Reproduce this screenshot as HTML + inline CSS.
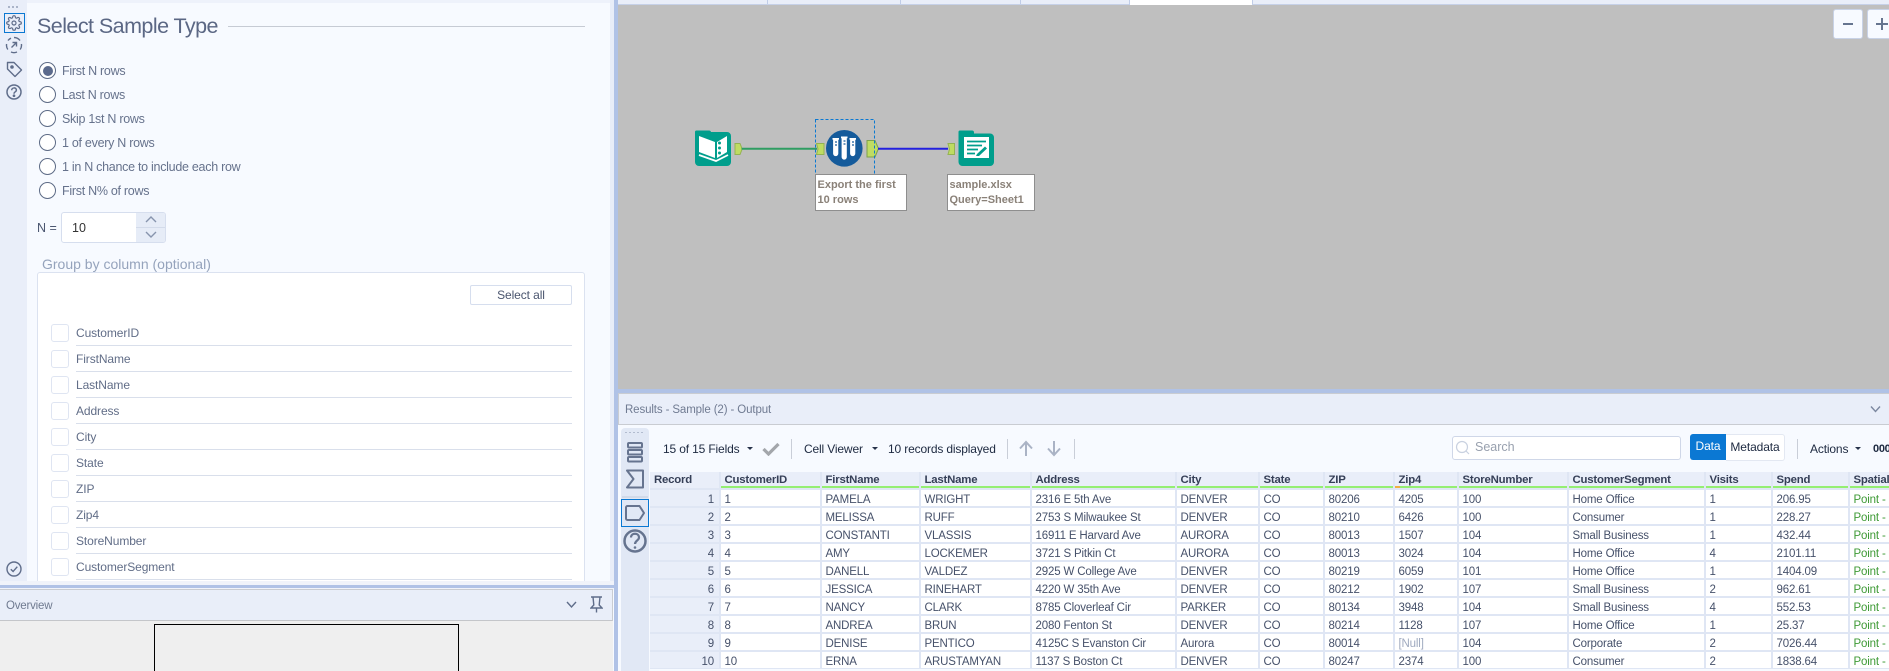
<!DOCTYPE html>
<html><head><meta charset="utf-8"><title>Sample</title>
<style>
html,body{margin:0;padding:0;width:1889px;height:671px;overflow:hidden;background:#f7faff;font-family:"Liberation Sans",sans-serif}
#root{position:relative;width:1889px;height:671px;overflow:hidden}
.a{position:absolute}
.t{position:absolute;white-space:nowrap}
.radio{position:absolute;left:39px;width:15px;height:15px;border:1.3px solid #5d6b86;border-radius:50%;background:#fff}
.rl{position:absolute;left:62px;font-size:12.5px;letter-spacing:-.28px;color:#66728c;line-height:16px;white-space:nowrap}
.cb{position:absolute;left:50.5px;width:16px;height:16px;border:1px solid #dfe5f2;border-radius:3px;background:#fff}
.cl{position:absolute;left:76px;font-size:12px;letter-spacing:-.1px;color:#616d87;line-height:16px;white-space:nowrap}
.dv{position:absolute;left:76px;width:496px;height:1px;background:#d9dfeb}
.sep{position:absolute;top:439px;width:1px;height:20px;background:#c9ced8}
.tb{position:absolute;font-size:12px;letter-spacing:-.15px;color:#1d2940;line-height:16px;white-space:nowrap;top:441px}
.car{position:absolute;top:447px;width:0;height:0;border-left:3px solid transparent;border-right:3px solid transparent;border-top:3px solid #27324a}
#g{position:absolute;left:650px;top:472px;width:1260px;height:199px;background:#dfe6f4;overflow:hidden}
.r{display:flex;height:16px;margin-bottom:2px}
.r>div{flex:none;margin-right:2px;background:#fff;white-space:nowrap;overflow:hidden;padding-left:3.5px;box-sizing:border-box;font-size:11.5px;letter-spacing:-.16px;line-height:20px;color:#46516a}
.r>div:nth-child(1){width:69px;background:#e9eef9;text-align:right;padding:0 5px 0 0;}
.r>div:nth-child(2){width:99px}.r>div:nth-child(3){width:97px}.r>div:nth-child(4){width:109px}.r>div:nth-child(5){width:143px}
.r>div:nth-child(6){width:81px}.r>div:nth-child(7){width:63px}.r>div:nth-child(8){width:68px}.r>div:nth-child(9){width:62px}
.r>div:nth-child(10){width:108px}.r>div:nth-child(11){width:135px}.r>div:nth-child(12){width:65px}.r>div:nth-child(13){width:75px}
.r>div:nth-child(14){width:60px;color:#3e9a35;margin:0}
.h{height:14px;margin-bottom:4px;position:relative;overflow:visible}
.h>div{background:#e9eef9;height:14px;font-size:11.4px;font-weight:bold;letter-spacing:-.2px;line-height:17px;color:#353f57;box-shadow:0 2px 0 #94ee72;overflow:visible}
.h>div:nth-child(1){text-align:left;padding-left:4px;box-shadow:none;height:16px}
.n{color:#a0aabf!important}
</style></head><body><div id="root">

<!-- left panel -->
<div class="a" style="left:0;top:0;width:610px;height:3px;background:#eef2fb"></div>
<div class="a" style="left:0;top:0;width:27px;height:581px;background:#e9eef9"></div>
<div class="a" style="left:610px;top:0;width:4px;height:590px;background:#e8edf8"></div>
<div class="a" style="left:614px;top:0;width:4px;height:671px;background:#b0c2e6"></div>
<div class="a" style="left:8px;top:6px;width:2px;height:2px;background:#aab4c8;box-shadow:4px 0 #aab4c8,8px 0 #aab4c8"></div>
<div class="a" style="left:4px;top:13px;width:19px;height:18px;border:1px solid #0a78d2"></div>
<svg class="a" style="left:6px;top:15px" width="16" height="16" viewBox="0 0 24 24" fill="none" stroke="#5f6d8a" stroke-width="1.8"><circle cx="12" cy="12" r="3"/><path d="M19.4 15a1.65 1.65 0 0 0 .33 1.82l.06.06a2 2 0 0 1 0 2.83 2 2 0 0 1-2.83 0l-.06-.06a1.65 1.65 0 0 0-1.82-.33 1.65 1.65 0 0 0-1 1.51V21a2 2 0 0 1-2 2 2 2 0 0 1-2-2v-.09A1.65 1.65 0 0 0 9 19.4a1.65 1.65 0 0 0-1.82.33l-.06.06a2 2 0 0 1-2.83 0 2 2 0 0 1 0-2.83l.06-.06a1.65 1.65 0 0 0 .33-1.82 1.65 1.65 0 0 0-1.51-1H3a2 2 0 0 1-2-2 2 2 0 0 1 2-2h.09A1.65 1.65 0 0 0 4.6 9a1.65 1.65 0 0 0-.33-1.82l-.06-.06a2 2 0 0 1 0-2.83 2 2 0 0 1 2.83 0l.06.06a1.65 1.65 0 0 0 1.82.33H9a1.65 1.65 0 0 0 1-1.51V3a2 2 0 0 1 2-2 2 2 0 0 1 2 2v.09a1.65 1.65 0 0 0 1 1.51 1.65 1.65 0 0 0 1.82-.33l.06-.06a2 2 0 0 1 2.83 0 2 2 0 0 1 0 2.83l-.06.06a1.65 1.65 0 0 0-.33 1.82V9a1.65 1.65 0 0 0 1.51 1H21a2 2 0 0 1 2 2 2 2 0 0 1-2 2h-.09a1.65 1.65 0 0 0-1.51 1z"/></svg>
<svg class="a" style="left:5px;top:36px" width="18" height="18" viewBox="0 0 18 18" fill="none" stroke="#5f6d8a" stroke-width="1.4"><path d="M9 1.5a7.5 7.5 0 0 1 6 3M16.4 8a7.5 7.5 0 0 1-1.2 5.5M12 16a7.5 7.5 0 0 1-6 0M2.8 13.5A7.5 7.5 0 0 1 1.6 8M3 4.5a7.5 7.5 0 0 1 3-2.3"/><path d="M6.5 11.5l5-5M7.5 6.5h4v4"/></svg>
<svg class="a" style="left:6px;top:61px" width="17" height="17" viewBox="0 0 17 17" fill="none" stroke="#5f6d8a" stroke-width="1.4"><path d="M1.5 1.5h6.5l7.5 7.5-6.5 6.5-7.5-7.5z" stroke-linejoin="round"/><circle cx="6" cy="6" r="1.1" fill="#5f6d8a"/></svg>
<svg class="a" style="left:6px;top:84px" width="16" height="16" viewBox="0 0 16 16" fill="none" stroke="#5f6d8a" stroke-width="1.5"><circle cx="8" cy="8" r="7"/><path d="M5.7 6.2c0-3 4.7-3 4.7-.1 0 1.7-2.4 1.8-2.4 3.6"/><circle cx="8" cy="11.7" r=".6" fill="#5f6d8a"/></svg>
<svg class="a" style="left:6px;top:561px" width="16" height="16" viewBox="0 0 16 16" fill="none" stroke="#5f6d8a" stroke-width="1.4"><circle cx="8" cy="8" r="7"/><path d="M4.8 8.2l2.3 2.3 4.2-4.8"/></svg>

<div class="t" style="left:37px;top:13px;font-size:21.5px;letter-spacing:-.55px;line-height:26px;color:#5b6784">Select Sample Type</div>
<div class="a" style="left:228px;top:26px;width:357px;height:1px;background:#c6cbd4"></div>

<div class="radio" style="top:62px"></div><div class="a" style="left:42.5px;top:65.7px;width:10px;height:10px;border-radius:50%;background:#5b6a8c"></div>
<div class="radio" style="top:86px"></div><div class="radio" style="top:110px"></div><div class="radio" style="top:134px"></div><div class="radio" style="top:158px"></div><div class="radio" style="top:182px"></div>
<div class="rl" style="top:63px">First N rows</div>
<div class="rl" style="top:87px">Last N rows</div>
<div class="rl" style="top:111px">Skip 1st N rows</div>
<div class="rl" style="top:135px">1 of every N rows</div>
<div class="rl" style="top:159px">1 in N chance to include each row</div>
<div class="rl" style="top:183px">First N% of rows</div>

<div class="t" style="left:37px;top:220px;font-size:12.5px;line-height:16px;color:#4b5670">N =</div>
<div class="a" style="left:61px;top:212px;width:103px;height:29px;border:1px solid #d6deee;border-radius:3px;background:#fff;overflow:hidden"><div class="a" style="left:74px;top:0;width:29px;height:29px;background:#e6ecf7"></div><div class="a" style="left:74px;top:14px;width:29px;height:1px;background:#d3dbea"></div></div>
<div class="t" style="left:72px;top:220px;font-size:12.5px;line-height:16px;color:#333">10</div>
<svg class="a" style="left:144px;top:215px" width="14" height="24" viewBox="0 0 14 24" fill="none" stroke="#8794ad" stroke-width="1.4"><path d="M2 7l5-5 5 5M2 17l5 5 5-5"/></svg>

<div class="t" style="left:42px;top:256px;font-size:14px;line-height:17px;color:#95a3bc">Group by column (optional)</div>
<div class="a" style="left:37px;top:272px;width:546px;height:320px;border:1px solid #dbe2f0;border-radius:3px;background:#fff"></div>
<div class="a" style="left:470px;top:285px;width:100px;height:18px;border:1px solid #d6deee;border-radius:2px;background:#fff;font-size:12px;letter-spacing:-.1px;line-height:19px;text-align:center;color:#4a556e">Select all</div>

<div class="cb" style="top:324px"></div><div class="cl" style="top:325px">CustomerID</div><div class="dv" style="top:345px"></div>
<div class="cb" style="top:350px"></div><div class="cl" style="top:351px">FirstName</div><div class="dv" style="top:371px"></div>
<div class="cb" style="top:376px"></div><div class="cl" style="top:377px">LastName</div><div class="dv" style="top:397px"></div>
<div class="cb" style="top:402px"></div><div class="cl" style="top:403px">Address</div><div class="dv" style="top:423px"></div>
<div class="cb" style="top:428px"></div><div class="cl" style="top:429px">City</div><div class="dv" style="top:449px"></div>
<div class="cb" style="top:454px"></div><div class="cl" style="top:455px">State</div><div class="dv" style="top:475px"></div>
<div class="cb" style="top:480px"></div><div class="cl" style="top:481px">ZIP</div><div class="dv" style="top:501px"></div>
<div class="cb" style="top:506px"></div><div class="cl" style="top:507px">Zip4</div><div class="dv" style="top:527px"></div>
<div class="cb" style="top:532px"></div><div class="cl" style="top:533px">StoreNumber</div><div class="dv" style="top:553px"></div>
<div class="cb" style="top:558px"></div><div class="cl" style="top:559px">CustomerSegment</div><div class="dv" style="top:579px"></div>

<!-- splitter + overview -->
<div class="a" style="left:0;top:581px;width:614px;height:9px;background:#f0f3fa"></div>
<div class="a" style="left:0;top:585px;width:614px;height:3px;background:#b0c2e6"></div>
<div class="a" style="left:0;top:589px;width:613px;height:31.5px;box-sizing:border-box;background:#e9eef9;border-top:1px solid #c9ccd2;border-bottom:1px solid #c4c6ca;border-right:1px solid #c9ccd2"></div>
<div class="t" style="left:6px;top:598px;font-size:11.5px;letter-spacing:-.2px;line-height:16px;color:#6f7a90">Overview</div>
<svg class="a" style="left:566px;top:600px" width="11" height="9" viewBox="0 0 11 9" fill="none" stroke="#5f6d8a" stroke-width="1.4"><path d="M1 2l4.5 5L10 2"/></svg>
<svg class="a" style="left:590px;top:596px" width="13" height="17" viewBox="0 0 13 17" fill="none" stroke="#5f6d8a" stroke-width="1.4"><path d="M1 1h11M3 1l.8 8L1 12h11L9.2 9 10 1M6.5 12v4.5"/></svg>
<div class="a" style="left:0;top:620.5px;width:613px;height:51px;background:#efefef"></div>
<div class="a" style="left:154px;top:624px;width:303px;height:60px;border:1px solid #000"></div>

<!-- tabs + canvas -->
<div class="a" style="left:618px;top:0;width:1271px;height:4px;background:#e9eef9"></div>
<div class="a" style="left:767px;top:0;width:1px;height:4px;background:#c0cde8"></div>
<div class="a" style="left:900px;top:0;width:1px;height:4px;background:#c0cde8"></div>
<div class="a" style="left:1020px;top:0;width:1px;height:4px;background:#c0cde8"></div>
<div class="a" style="left:1129px;top:0;width:122px;height:5px;background:#fff;border-left:1px solid #c0cde8;border-right:1px solid #c0cde8"></div>
<div class="a" style="left:618px;top:5px;width:1271px;height:384px;background:#bfbfbf"></div>
<div class="a" style="left:618px;top:4px;width:511px;height:1px;background:#c6d1e8"></div>
<div class="a" style="left:1252px;top:4px;width:637px;height:1px;background:#c6d1e8"></div>

<div class="a" style="left:1833px;top:9px;width:28px;height:28px;background:#f7faff;border:1px solid #c8d2e6;border-radius:3px"></div>
<div class="a" style="left:1843px;top:23px;width:10px;height:2px;background:#66758f"></div>
<div class="a" style="left:1867px;top:9px;width:28px;height:28px;background:#f7faff;border:1px solid #c8d2e6;border-radius:3px"></div>
<div class="a" style="left:1876px;top:23px;width:12px;height:2px;background:#66758f"></div>
<div class="a" style="left:1881px;top:18px;width:2px;height:12px;background:#66758f"></div>

<!-- workflow -->
<svg class="a" style="left:660px;top:100px" width="400" height="130" viewBox="0 0 400 130">
<path d="M35 34V32a1.5 1.5 0 0 1 1.5-1.5H49a2 2 0 0 1 2 1.500H67a4 4 0 0 1 4 4V62a4 4 0 0 1-4 4H39a4 4 0 0 1-4-4z" fill="#009e8c"/>
<path d="M39 36l16 6v16l-16-6z M57 42l10-6v16l-10 6z" fill="#fff"/>
<path d="M39 55l17 6 12-6" fill="none" stroke="#fff" stroke-width="1.800"/>
<circle cx="59.500" cy="43" r="1.500" fill="#009e8c"/><circle cx="59.500" cy="48" r="1.500" fill="#009e8c"/><circle cx="59.500" cy="53" r="1.500" fill="#009e8c"/>
<path d="M75 43.500h5l2.200 5.500-2.200 5.500h-5z" fill="#bfdc62" stroke="#94b351" stroke-width="1"/>
<path d="M81.500 48.700H157" stroke="#2f9d62" stroke-width="2"/>
<path d="M156.500 43.500h7.500v11h-7.500l1.500-5.500z" fill="#bfdc62" stroke="#94b351" stroke-width="1"/>
<circle cx="184.300" cy="48.300" r="18.300" fill="#155b9b"/>
<g fill="#fff"><path d="M172.500 38h6.500v1.800h-.7v13.700a2.600 2.600 0 0 1-5.200 0V39.800h-.6z"/><path d="M181 36.500h6.500v1.800h-.7v18.700a2.600 2.600 0 0 1-5.200 0V38.300h-.6z"/><path d="M189.500 38h6.500v1.800h-.7v13.700a2.600 2.600 0 0 1-5.200 0V39.800h-.6z"/></g>
<g stroke="#155b9b" stroke-width="1.200"><path d="M175 42h2M175 45h2M183.500 41h2M183.500 44h2M192 42h2M192 45h2"/></g>
<path d="M207 40.500h8l3.500 8-3.500 8.500h-8z" fill="#bfdc62" stroke="#7da14c" stroke-width="1"/>
<path d="M218 48.700H288" stroke="#2320de" stroke-width="2"/>
<path d="M288 43.500h6.500v11H288l1.500-5.500z" fill="#bfdc62" stroke="#94b351" stroke-width="1"/>
<rect x="155.500" y="19.500" width="59" height="55" fill="none" stroke="#0a78d2" stroke-width="1" stroke-dasharray="3 2"/>
<path d="M298.500 33.500v-1.500a1.500 1.500 0 0 1 1.500-1.500h12a2 2 0 0 1 2 2v1h16a4 4 0 0 1 4 4v24.500a4 4 0 0 1-4 4h-27.500a4 4 0 0 1-4-4z" fill="#009e8c"/>
<rect x="304" y="37" width="25" height="21" fill="#fff"/>
<path d="M307 41.500h19M307 45.500h15M307 49.500h11M307 53.500h8" stroke="#009e8c" stroke-width="1.800"/>
<path d="M317 54l8-7.500 2 2-8 7.500h-3z" fill="#009e8c"/>
</svg>
<div class="a" style="left:815px;top:174px;width:90px;height:35px;background:#fff;border:1.300px solid #8e8e8e;font-weight:bold;font-size:11px;line-height:15px;color:#8a8178;padding:0;white-space:nowrap"><div style="padding:2.500px 0 0 1.500px">Export the first<br>10 rows</div></div>
<div class="a" style="left:947px;top:174px;width:86px;height:35px;background:#fff;border:1.300px solid #8e8e8e;font-weight:bold;font-size:11px;line-height:15px;color:#8a8178;white-space:nowrap"><div style="padding:2.500px 0 0 1.500px">sample.xlsx<br>Query=Sheet1</div></div>

<!-- results -->
<div class="a" style="left:618px;top:389px;width:1271px;height:4px;background:#b0c2e6"></div>
<div class="a" style="left:618px;top:393px;width:1271px;height:32px;box-sizing:border-box;background:#e9eef9;border:1px solid #c9ccd2;border-right:0"></div>
<div class="t" style="left:625px;top:402px;font-size:11.500px;letter-spacing:-.12px;line-height:16px;color:#707b92">Results - Sample (2) - Output</div>
<svg class="a" style="left:1870px;top:405px" width="11" height="8" viewBox="0 0 11 8" fill="none" stroke="#7c88a0" stroke-width="1.400"><path d="M1 1.500l4.500 5 4.500-5"/></svg>

<div class="a" style="left:618px;top:425px;width:1271px;height:246px;background:#f7faff"></div>
<div class="a" style="left:621px;top:428px;width:28px;height:243px;background:#e1e8f5;border-radius:4px 4px 0 0"></div>
<div class="a" style="left:625px;top:431.500px;width:2px;height:1.500px;background:#b2bccf;box-shadow:4px 0 #b2bccf,8px 0 #b2bccf,12px 0 #b2bccf,16px 0 #b2bccf"></div>
<svg class="a" style="left:621px;top:428px" width="28" height="128" viewBox="621 428 28 128" fill="none" stroke="#66748f" stroke-width="2">
<rect x="628" y="443" width="14" height="4.500" rx="1"/><rect x="628" y="450" width="14" height="4.500" rx="1"/><rect x="628" y="457" width="14" height="4.500" rx="1"/>
<path d="M643 470.500h-16l6.500 8.500-6.500 8.500h16z" stroke-linejoin="round"/>
<path d="M622 497h26" stroke="#c2cbdb" stroke-width="1"/>
<rect x="621.500" y="499.500" width="27" height="27" stroke="#0a78d2" stroke-width="1"/>
<path d="M627.500 506h12l4.500 7-4.500 7h-12a1.500 1.500 0 0 1-1.500-1.500v-11a1.500 1.500 0 0 1 1.500-1.500z" stroke-linejoin="round"/>
<circle cx="635" cy="541" r="10.500" stroke-width="2.500"/>
<path d="M631 537.500c0-5 8-5 8 0 0 3-4 3-4 6.500" stroke-width="2.200"/><circle cx="635" cy="547.500" r="1.300" fill="#66748f" stroke="none"/>
</svg>

<div class="tb" style="left:663px">15 of 15 Fields</div><div class="car" style="left:746.500px"></div>
<svg class="a" style="left:762px;top:442px" width="18" height="14" viewBox="0 0 18 14" fill="none" stroke="#a3a6ab" stroke-width="3.200"><path d="M1.500 7l5 5L16.500 2"/></svg>
<div class="sep" style="left:791px"></div>
<div class="tb" style="left:804px">Cell Viewer</div><div class="car" style="left:871.500px"></div>
<div class="tb" style="left:888px">10 records displayed</div>
<div class="sep" style="left:1007px"></div>
<svg class="a" style="left:1018px;top:440px" width="44" height="17" viewBox="0 0 44 17" fill="none" stroke="#aab3c5" stroke-width="2"><path d="M8 16V2M2 8.500L8 2l6 6.500M36 1v14M30 8.500l6 6.500 6-6.500"/></svg>
<div class="sep" style="left:1074px"></div>

<div class="a" style="left:1452px;top:436px;width:227px;height:22px;background:#fff;border:1px solid #cfd7e8;border-radius:3px"></div>
<svg class="a" style="left:1455px;top:440px" width="15" height="15" viewBox="0 0 15 15" fill="none" stroke="#c9d1e0" stroke-width="1.200"><circle cx="7" cy="7" r="5.500"/><path d="M11 11l3 3"/></svg>
<div class="t" style="left:1475px;top:439px;font-size:12.500px;line-height:16px;color:#98a0ae">Search</div>
<div class="a" style="left:1690px;top:434px;width:36px;height:26px;background:#0b78d3;border-radius:3px 0 0 3px;color:#fff;font-size:12px;letter-spacing:-.1px;line-height:25px;text-align:center">Data</div>
<div class="a" style="left:1726px;top:434px;width:58px;height:25px;background:#fff;border:1px solid #e3e8f2;border-left:0;border-radius:0 3px 3px 0;color:#1d2940;font-size:12px;letter-spacing:-.1px;line-height:24px;text-align:center">Metadata</div>
<div class="sep" style="left:1797px"></div>
<div class="tb" style="left:1810px">Actions</div><div class="car" style="left:1855px"></div>
<div class="tb" style="left:1873px;font-weight:bold;font-size:11px;letter-spacing:-.3px">000</div>

<div id="g">
<div class="r h"><div>Record</div><div>CustomerID</div><div>FirstName</div><div>LastName</div><div>Address</div><div>City</div><div>State</div><div>ZIP</div><div>Zip4</div><div>StoreNumber</div><div>CustomerSegment</div><div>Visits</div><div>Spend</div><div style="color:#353f57">Spatial</div></div>
<div class="r"><div>1</div><div>1</div><div>PAMELA</div><div>WRIGHT</div><div>2316 E 5th Ave</div><div>DENVER</div><div>CO</div><div>80206</div><div>4205</div><div>100</div><div>Home Office</div><div>1</div><div>206.95</div><div>Point - </div></div>
<div class="r"><div>2</div><div>2</div><div>MELISSA</div><div>RUFF</div><div>2753 S Milwaukee St</div><div>DENVER</div><div>CO</div><div>80210</div><div>6426</div><div>100</div><div>Consumer</div><div>1</div><div>228.27</div><div>Point - </div></div>
<div class="r"><div>3</div><div>3</div><div>CONSTANTI</div><div>VLASSIS</div><div>16911 E Harvard Ave</div><div>AURORA</div><div>CO</div><div>80013</div><div>1507</div><div>104</div><div>Small Business</div><div>1</div><div>432.44</div><div>Point - </div></div>
<div class="r"><div>4</div><div>4</div><div>AMY</div><div>LOCKEMER</div><div>3721 S Pitkin Ct</div><div>AURORA</div><div>CO</div><div>80013</div><div>3024</div><div>104</div><div>Home Office</div><div>4</div><div>2101.11</div><div>Point - </div></div>
<div class="r"><div>5</div><div>5</div><div>DANELL</div><div>VALDEZ</div><div>2925 W College Ave</div><div>DENVER</div><div>CO</div><div>80219</div><div>6059</div><div>101</div><div>Home Office</div><div>1</div><div>1404.09</div><div>Point - </div></div>
<div class="r"><div>6</div><div>6</div><div>JESSICA</div><div>RINEHART</div><div>4220 W 35th Ave</div><div>DENVER</div><div>CO</div><div>80212</div><div>1902</div><div>107</div><div>Small Business</div><div>2</div><div>962.61</div><div>Point - </div></div>
<div class="r"><div>7</div><div>7</div><div>NANCY</div><div>CLARK</div><div>8785 Cloverleaf Cir</div><div>PARKER</div><div>CO</div><div>80134</div><div>3948</div><div>104</div><div>Small Business</div><div>4</div><div>552.53</div><div>Point - </div></div>
<div class="r"><div>8</div><div>8</div><div>ANDREA</div><div>BRUN</div><div>2080 Fenton St</div><div>DENVER</div><div>CO</div><div>80214</div><div>1128</div><div>107</div><div>Home Office</div><div>1</div><div>25.37</div><div>Point - </div></div>
<div class="r"><div>9</div><div>9</div><div>DENISE</div><div>PENTICO</div><div>4125C S Evanston Cir</div><div>Aurora</div><div>CO</div><div>80014</div><div class="n">[Null]</div><div>104</div><div>Corporate</div><div>2</div><div>7026.44</div><div>Point - </div></div>
<div class="r"><div>10</div><div>10</div><div>ERNA</div><div>ARUSTAMYAN</div><div>1137 S Boston Ct</div><div>DENVER</div><div>CO</div><div>80247</div><div>2374</div><div>100</div><div>Consumer</div><div>2</div><div>1838.64</div><div>Point - </div></div>
</div>
<div class="a" style="left:1395px;top:486px;width:5px;height:2px;background:#f0b040"></div>
<div class="a" style="left:650px;top:669px;width:1239px;height:2px;background:#f7faff"></div>
</div></body></html>
